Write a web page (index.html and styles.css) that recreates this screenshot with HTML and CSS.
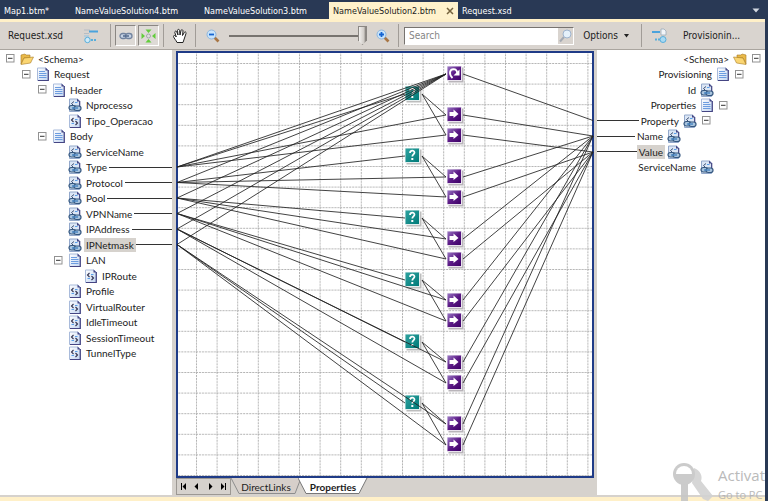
FILE: index.html
```html
<!DOCTYPE html>
<html lang="en">
<head>
    <meta charset="UTF-8">
    <meta name="viewport" content="width=device-width, initial-scale=1.0">
    <title>NameValueSolution2.btm</title>
    <link rel="stylesheet" href="styles.css">
</head>
<body>
    <!-- shared icons -->
    <svg class="sprites" aria-hidden="true">
        <defs>
            <linearGradient id="purple" x1="0" y1="0" x2="1" y2="1">
                <stop offset="0" stop-color="#9a78c4"/>
                <stop offset="0.5" stop-color="#5b1a86"/>
                <stop offset="1" stop-color="#3d0066"/>
            </linearGradient>
            <linearGradient id="teal" x1="0" y1="0" x2="1" y2="1">
                <stop offset="0" stop-color="#2fa3a0"/>
                <stop offset="1" stop-color="#007a78"/>
            </linearGradient>
            <linearGradient id="paper" x1="0" y1="0" x2="1" y2="1">
                <stop offset="0" stop-color="#ffffff"/>
                <stop offset="1" stop-color="#c3d6f2"/>
            </linearGradient>
            <pattern id="grid" x="18" y="10" width="20.6" height="20.6" patternUnits="userSpaceOnUse">
                <path d="M0.5 0V20.6M0 0.5H20.6" stroke="#b2b2b2" stroke-dasharray="2 1" fill="none"/>
            </pattern>
        </defs>
        <symbol id="folder" viewBox="0 0 14 14">
            <path d="M1 3L5 2L6 3H10V6H4L1 12Z" fill="#e9b949" stroke="#a87a22" stroke-width="0.6"/>
            <path d="M4 6L13.5 5L10.5 11L1 12.5Z" fill="#fbd672" stroke="#a87a22" stroke-width="0.6"/>
        </symbol>
        <symbol id="page" viewBox="0 0 14 14">
            <path d="M1.5 1H10L12 3V13.5H1.5Z" fill="url(#paper)" stroke="#a9bbdb"/>
            <path d="M12.3 3V13.5H2" fill="none" stroke="#454583" stroke-width="1.2"/>
            <path d="M9.5 0.5L12.5 3.5H9.5Z" fill="#454583"/>
            <path d="M3 4.5H9M3 6.5H10.5M3 8.5H10.5M3 10.5H10.5" stroke="#6d9de0"/>
        </symbol>
        <symbol id="field" viewBox="0 0 14 14">
            <path d="M1.5 1H10L12 3V13.5H1.5Z" fill="url(#paper)" stroke="#a9bbdb"/>
            <path d="M12.3 3V13.5H2" fill="none" stroke="#454583" stroke-width="1.2"/>
            <path d="M9.5 0.5L12.5 3.5H9.5Z" fill="#454583"/>
            <path d="M5.5 4L3.5 6L5.5 8M7.5 7L9.5 9L7.5 11" fill="none" stroke="#33334f" stroke-width="1.1"/>
            <path d="M7 5.5H9.5M3.5 9.5H6" stroke="#5aa0ea"/>
        </symbol>
        <symbol id="linked" viewBox="0 0 14 14">
            <path d="M1.5 1H9.5L11.5 3V13.5H1.5Z" fill="#dbe6f5" stroke="#93a8cb"/>
            <path d="M9 0.5L12 3.5H9Z" fill="#454583"/>
            <path d="M11.7 3V8" stroke="#454583" stroke-width="1.2"/>
            <path d="M6 3.5L3.5 5.5L5 7" fill="none" stroke="#3c4f74"/>
            <path d="M7 4.5H9.5" stroke="#5aa0ea"/>
            <rect x="1" y="7.5" width="7" height="4.5" rx="2.2" fill="#a9c4de" stroke="#35577f" stroke-width="1.2"/>
            <rect x="6" y="8" width="7" height="4.5" rx="2.2" fill="#a9c4de" stroke="#35577f" stroke-width="1.2"/>
            <path d="M4 10H10" stroke="#3f7fc0" stroke-width="1.3"/>
        </symbol>
        <symbol id="minus" viewBox="0 0 9 9">
            <rect x="0.5" y="0.5" width="7.5" height="7.5" fill="#fff" stroke="#929292"/>
            <path d="M2 4.3H6.5" stroke="#333"/>
        </symbol>
        <symbol id="arrow" viewBox="0 0 17 17">
            <rect x="1.5" y="1.5" width="15" height="15" fill="#b9b5ba"/>
            <rect width="15" height="15" fill="#eae4ee"/>
            <rect x="0.5" y="0.5" width="13.5" height="13.5" fill="url(#purple)"/>
            <path d="M2.5 5H6.5V2.5L11.5 7L6.5 11V9H2.5Z" fill="#fff"/>
        </symbol>
        <symbol id="loop" viewBox="0 0 17 17">
            <rect x="1.5" y="1.5" width="15" height="15" fill="#b9b5ba"/>
            <rect width="15" height="15" fill="#eae4ee"/>
            <rect x="0.5" y="0.5" width="13.5" height="13.5" fill="url(#purple)"/>
            <path d="M5.5 12C1.5 8 2.5 3.5 6.5 3.2C9 3.2 10 5 10.2 7" fill="none" stroke="#fff" stroke-width="1.8"/>
            <path d="M6.5 9.5H12.5V3.5Z" fill="#fff"/>
        </symbol>
        <symbol id="question" viewBox="0 0 17 17">
            <rect x="1.5" y="1.5" width="15" height="15" fill="#bdbdbd"/>
            <rect width="15" height="15" fill="#e4efef"/>
            <rect x="0.5" y="0.5" width="13.5" height="13.5" fill="url(#teal)"/>
            <path d="M5 5C5 2 9.5 2 9.5 4.5C9.5 6.3 7.3 6.3 7.3 8.5" fill="none" stroke="#fff" stroke-width="1.7"/>
            <rect x="6.3" y="10" width="2" height="2" fill="#fff"/>
        </symbol>
        <symbol id="schema" viewBox="0 0 16 16">
            <path d="M1 2H7M1 5.5H6" stroke="#b6bdc4"/>
            <path d="M6 3.5H15" stroke="#4ba3dc" stroke-width="2"/>
            <path d="M1 8H6" stroke="#8fc4e6"/>
            <circle cx="4.5" cy="12" r="2.7" fill="#cfeaf8" stroke="#58aedb"/>
            <path d="M8 12H10M11 12H13" stroke="#58aedb" stroke-width="2"/>
        </symbol>
        <symbol id="schema-out" viewBox="0 0 16 16">
            <path d="M1 4H9" stroke="#4ba3dc" stroke-width="2"/>
            <path d="M10 1H13L15 3V7H10Z" fill="#f2f5f8" stroke="#9aa9b8" stroke-width="0.8"/>
            <path d="M4 11.5H6M7 11.5H9" stroke="#58aedb" stroke-width="2"/>
            <circle cx="12" cy="11.5" r="3" fill="#a9d9f2" stroke="#58aedb"/>
        </symbol>
        <symbol id="zoom-out" viewBox="0 0 14 14">
            <path d="M8.5 8.5L12.5 12.5" stroke="#a87645" stroke-width="2.6"/>
            <circle cx="5.5" cy="5.5" r="4.5" fill="#c8e4fb" stroke="#8db4dc"/>
            <path d="M3 5.5H8" stroke="#1464d2" stroke-width="1.8"/>
        </symbol>
        <symbol id="zoom-in" viewBox="0 0 14 14">
            <path d="M8.5 8.5L12.5 12.5" stroke="#a87645" stroke-width="2.6"/>
            <circle cx="5.5" cy="5.5" r="4.5" fill="#c8e4fb" stroke="#8db4dc"/>
            <path d="M3 5.5H8M5.5 3V8" stroke="#1464d2" stroke-width="1.8"/>
        </symbol>
    </svg>

    <nav class="file-tabs">
        <button class="file-tab">Map1.btm*</button>
        <button class="file-tab">NameValueSolution4.btm</button>
        <button class="file-tab">NameValueSolution3.btm</button>
        <div class="file-tab active">
            <span>NameValueSolution2.btm</span>
            <button class="close" aria-label="Close">
                <svg width="8" height="8" viewBox="0 0 8 8"><path d="M1 1L7 7M7 1L1 7" stroke="#75633d" stroke-width="1.5"/></svg>
            </button>
        </div>
        <button class="file-tab">Request.xsd</button>
        <button class="tab-menu" aria-label="Open files">
            <svg width="8" height="5" viewBox="0 0 8 5"><path d="M0.5 0.5H7.5L4 4.5Z" fill="#d3d9e2"/></svg>
        </button>
    </nav>

    <div class="window">
        <div class="toolbar">
            <div class="group source">
                <span>Request.xsd</span>
                <svg width="16" height="16"><use href="#schema"/></svg>
            </div>
            <div class="group toggles">
                <button class="toggle" aria-label="Show links">
                    <svg width="14" height="10" viewBox="0 0 14 10">
                        <rect x="1" y="2.5" width="6.5" height="5" rx="2.5" fill="#c5d2e4" stroke="#71839f" stroke-width="1.3"/>
                        <rect x="6.5" y="2.5" width="6.5" height="5" rx="2.5" fill="#c5d2e4" stroke="#71839f" stroke-width="1.3"/>
                        <path d="M4 5H10" stroke="#52688c" stroke-width="1.5"/>
                    </svg>
                </button>
                <button class="toggle" aria-label="Center">
                    <svg width="15" height="14" viewBox="0 0 15 14">
                        <path d="M4.5 0.5H10.5L7.5 4ZM4.5 13.5H10.5L7.5 10ZM0.5 4L4 7L0.5 10ZM14.5 4L11 7L14.5 10Z" fill="#62cd3c"/>
                        <circle cx="7.5" cy="7" r="2" fill="#dedede" stroke="#a3a8ad"/>
                    </svg>
                </button>
            </div>
            <div class="group pan">
                <button class="tool" aria-label="Pan">
                    <svg width="16" height="16" viewBox="0 0 16 16">
                        <path d="M5 14.5C4 12 2 10.5 1.5 8.5C1.5 7 3 7 4.3 9L2.8 4.5C2.6 3 4.3 2.5 4.8 4L6 7L5.5 2.5C5.5 1 7.5 1 7.6 2.5L8 7L9 2.5C9.3 1.2 11 1.5 11 3L10.5 7.5L12.3 4.5C13 3.3 14.5 4 14 5.5L12.5 10L11 14.5Z" fill="#fff" stroke="#222"/>
                    </svg>
                </button>
            </div>
            <div class="group zoom">
                <button class="tool" aria-label="Zoom out"><svg width="14" height="14"><use href="#zoom-out"/></svg></button>
                <input class="slider" type="range" min="0" max="100" value="100" aria-label="Zoom">
                <button class="tool" aria-label="Zoom in"><svg width="14" height="14"><use href="#zoom-in"/></svg></button>
            </div>
            <div class="group find">
                <div class="search">
                    <input type="text" placeholder="Search" aria-label="Search">
                    <button class="tool" aria-label="Find">
                        <svg width="15" height="14" viewBox="0 0 15 14">
                            <path d="M6 8L2 12.5" stroke="#a5aab3" stroke-width="2"/>
                            <circle cx="9" cy="5" r="4" fill="#e5f1fb" stroke="#9fb4ce"/>
                        </svg>
                    </button>
                </div>
                <button class="options">
                    Options
                    <svg width="5" height="4" viewBox="0 0 5 4"><path d="M0 0H5L2.5 3.5Z" fill="#222"/></svg>
                </button>
            </div>
            <div class="group target">
                <svg width="16" height="16"><use href="#schema-out"/></svg>
                <span>Provisionin...</span>
            </div>
        </div>

        <div class="mapper">
            <ul class="tree">
                <li class="l0"><svg class="box"><use href="#minus"/></svg><svg class="icon"><use href="#folder"/></svg><span>&lt;Schema&gt;</span></li>
                <li class="l1"><svg class="box"><use href="#minus"/></svg><svg class="icon"><use href="#page"/></svg><span>Request</span></li>
                <li class="l2"><svg class="box"><use href="#minus"/></svg><svg class="icon"><use href="#page"/></svg><span>Header</span></li>
                <li class="l3 leaf"><svg class="icon"><use href="#linked"/></svg><span>Nprocesso</span></li>
                <li class="l3 leaf"><svg class="icon"><use href="#field"/></svg><span>Tipo_Operacao</span></li>
                <li class="l2"><svg class="box"><use href="#minus"/></svg><svg class="icon"><use href="#page"/></svg><span>Body</span></li>
                <li class="l3 leaf"><svg class="icon"><use href="#linked"/></svg><span>ServiceName</span></li>
                <li class="l3 leaf link"><svg class="icon"><use href="#linked"/></svg><span>Type</span></li>
                <li class="l3 leaf link"><svg class="icon"><use href="#linked"/></svg><span>Protocol</span></li>
                <li class="l3 leaf link"><svg class="icon"><use href="#linked"/></svg><span>Pool</span></li>
                <li class="l3 leaf link"><svg class="icon"><use href="#linked"/></svg><span>VPNName</span></li>
                <li class="l3 leaf link"><svg class="icon"><use href="#linked"/></svg><span>IPAddress</span></li>
                <li class="l3 leaf link"><svg class="icon"><use href="#linked"/></svg><span class="selected">IPNetmask</span></li>
                <li class="l3"><svg class="box"><use href="#minus"/></svg><svg class="icon"><use href="#page"/></svg><span>LAN</span></li>
                <li class="l4 leaf"><svg class="icon"><use href="#field"/></svg><span>IPRoute</span></li>
                <li class="l3 leaf"><svg class="icon"><use href="#field"/></svg><span>Profile</span></li>
                <li class="l3 leaf"><svg class="icon"><use href="#field"/></svg><span>VirtualRouter</span></li>
                <li class="l3 leaf"><svg class="icon"><use href="#field"/></svg><span>IdleTimeout</span></li>
                <li class="l3 leaf"><svg class="icon"><use href="#field"/></svg><span>SessionTimeout</span></li>
                <li class="l3 leaf"><svg class="icon"><use href="#field"/></svg><span>TunnelType</span></li>
            </ul>

            <main class="center">
                <div class="canvas">
                    <svg viewBox="0 0 414 423">
                        <rect width="414" height="423" fill="url(#grid)"/>
                        <!-- functoids -->
                        <use href="#loop" x="269" y="13" width="17" height="17"/>
                        <use href="#question" x="227" y="33" width="17" height="17"/>
                        <use href="#question" x="227" y="95" width="17" height="17"/>
                        <use href="#question" x="227" y="157" width="17" height="17"/>
                        <use href="#question" x="227" y="219" width="17" height="17"/>
                        <use href="#question" x="227" y="281" width="17" height="17"/>
                        <use href="#question" x="227" y="342" width="17" height="17"/>
                        <use href="#arrow" x="269" y="54" width="17" height="17"/>
                        <use href="#arrow" x="269" y="75" width="17" height="17"/>
                        <use href="#arrow" x="269" y="116" width="17" height="17"/>
                        <use href="#arrow" x="269" y="137" width="17" height="17"/>
                        <use href="#arrow" x="269" y="178" width="17" height="17"/>
                        <use href="#arrow" x="269" y="199" width="17" height="17"/>
                        <use href="#arrow" x="269" y="240" width="17" height="17"/>
                        <use href="#arrow" x="269" y="260" width="17" height="17"/>
                        <use href="#arrow" x="269" y="302" width="17" height="17"/>
                        <use href="#arrow" x="269" y="322" width="17" height="17"/>
                        <use href="#arrow" x="269" y="363" width="17" height="17"/>
                        <use href="#arrow" x="269" y="384" width="17" height="17"/>
                        <g class="wires">
                            <!-- source fields to functoids -->
                            <path d="M-1 114L268 21M-1 114L227 41M-1 114L268 62M-1 114L268 82"/>
                            <path d="M-1 129.5L268 21M-1 129.5L227 103M-1 129.5L268 124M-1 129.5L268 144"/>
                            <path d="M-1 145L268 21M-1 145L227 165M-1 145L268 186M-1 145L268 206"/>
                            <path d="M-1 160.5L268 21M-1 160.5L227 227M-1 160.5L268 247M-1 160.5L268 268"/>
                            <path d="M-1 176L268 21M-1 176L227 289M-1 176L268 309M-1 176L268 330"/>
                            <path d="M-1 191.5L268 21M-1 191.5L227 350M-1 191.5L268 371M-1 191.5L268 392"/>
                            <!-- question outputs -->
                            <path d="M244 41L268 62M244 41L268 82M244 103L268 124M244 103L268 144M244 165L268 186M244 165L268 206"/>
                            <path d="M244 227L268 247M244 227L268 268M244 289L268 309M244 289L268 330M244 350L268 371M244 350L268 392"/>
                            <!-- functoids to target fields -->
                            <path d="M285 21L415 67.5"/>
                            <path d="M285 62L415 83M285 124L415 83M285 186L415 83M285 247L415 83M285 309L415 83M285 371L415 83"/>
                            <path d="M285 82L415 99M285 144L415 99M285 206L415 99M285 268L415 99M285 330L415 99M285 392L415 99"/>
                        </g>
                    </svg>
                </div>
                <div class="pages">
                    <div class="pager">
                        <button aria-label="First page"><svg width="7" height="7" viewBox="0 0 7 7"><path d="M1 0H2V7H1ZM6 0V7L2.5 3.5Z"/></svg></button>
                        <button aria-label="Previous page"><svg width="7" height="7" viewBox="0 0 7 7"><path d="M5 0V7L1.5 3.5Z"/></svg></button>
                        <button aria-label="Next page"><svg width="7" height="7" viewBox="0 0 7 7"><path d="M2 0V7L5.5 3.5Z"/></svg></button>
                        <button aria-label="Last page"><svg width="7" height="7" viewBox="0 0 7 7"><path d="M1 0V7L4.5 3.5ZM5 0H6V7H5Z"/></svg></button>
                    </div>
                    <button class="page-tab">
                        <svg viewBox="0 0 70 17" preserveAspectRatio="none"><path d="M0 0L8 15.5H64L70 0" fill="#d6cfca" stroke="#8d8d8d"/></svg>
                        <span>DirectLinks</span>
                    </button>
                    <button class="page-tab current">
                        <svg viewBox="0 0 70 17" preserveAspectRatio="none"><path d="M0 0L8 15.5H61L69 0" fill="#fff" stroke="#777"/></svg>
                        <span>Properties</span>
                    </button>
                </div>
            </main>

            <div class="target-side">
                <ul class="tree mirrored">
                    <li class="l0"><svg class="box"><use href="#minus"/></svg><svg class="icon flip"><use href="#folder"/></svg><span>&lt;Schema&gt;</span></li>
                    <li class="l1"><svg class="box"><use href="#minus"/></svg><svg class="icon"><use href="#page"/></svg><span>Provisioning</span></li>
                    <li class="l2 leaf"><svg class="icon"><use href="#linked"/></svg><span>Id</span></li>
                    <li class="l2"><svg class="box"><use href="#minus"/></svg><svg class="icon"><use href="#page"/></svg><span>Properties</span></li>
                    <li class="l3 link"><svg class="box"><use href="#minus"/></svg><svg class="icon"><use href="#linked"/></svg><span>Property</span></li>
                    <li class="l4 leaf link"><svg class="icon"><use href="#linked"/></svg><span>Name</span></li>
                    <li class="l4 leaf link"><svg class="icon"><use href="#linked"/></svg><span class="selected">Value</span></li>
                    <li class="l2 leaf"><svg class="icon"><use href="#linked"/></svg><span>ServiceName</span></li>
                </ul>
            </div>
        </div>
    </div>

    <div class="watermark">
        <svg width="42" height="38" viewBox="0 0 42 38">
            <path d="M22 5C28 7 31 13 29 18L41 33L36 38L31 36L20 20Z" fill="#d2d2d2"/>
            <path d="M9 18H16V38H9Z" fill="#c6c6c6"/>
            <circle cx="12" cy="11" r="11" fill="#c6c6c6"/>
            <path d="M4 11A8 8 0 0 1 20 11Z" fill="#fff"/>
        </svg>
        <div>
            <p class="big">Activat</p>
            <p>Go to PC</p>
        </div>
    </div>
</body>
</html>
```
FILE: styles.css
```css
* {
    box-sizing: border-box;
}
body {
    margin: 0;
    min-height: 100vh;
    display: flex;
    flex-direction: column;
    position: relative;
    overflow: hidden;
    background: #293955;
    color: #1c1c1c;
    font-family: "DejaVu Sans Condensed", "DejaVu Sans", sans-serif;
    font-size: 10px;
    line-height: 14px;
}
button {
    border: none;
    background: none;
    padding: 0;
    color: inherit;
    font: inherit;
    cursor: pointer;
}
svg {
    display: block;
    flex: none;
}
.sprites {
    position: absolute;
    width: 0;
    height: 0;
}

/* open files */
.file-tabs {
    display: flex;
    height: 19px;
    padding-top: 2px;
    font-size: 9px;
}
.file-tab {
    padding: 0 22px 0 4px;
    color: #fff;
    white-space: nowrap;
}
.file-tab.active {
    display: flex;
    align-items: center;
    gap: 10px;
    padding-right: 4px;
    background: #fff2cc;
    color: #1c1c1c;
}
.tab-menu {
    margin-left: auto;
    padding-right: 8px;
}

.window {
    flex: 1;
    display: flex;
    flex-direction: column;
    margin-right: 3px;
    border-top: 3px solid #fff0c8;
    border-bottom: 4px solid #fff0c8;
    background: #d6d2cd;
}

/* toolbar */
.toolbar {
    display: flex;
    height: 28px;
    border-bottom: 1px solid #aaa59f;
    background: #d9d4cf;
}
.group {
    display: flex;
    align-items: center;
    border-left: 1px solid #a19c97;
    margin: 2px 0;
}
.source {
    width: 110px;
    justify-content: space-between;
    padding: 0 11px 0 8px;
    border-left: none;
}
.toggles {
    gap: 2px;
    padding: 0 4px;
}
.toggle {
    display: flex;
    align-items: center;
    justify-content: center;
    width: 21px;
    height: 21px;
    border: 1px solid;
    border-color: #8b8783 #fff #fff #8b8783;
    background: #dedad6;
}
.pan {
    width: 32px;
    justify-content: center;
}
.zoom {
    gap: 9px;
    padding: 0 8px 0 10px;
}
.slider {
    width: 138px;
    height: 20px;
    margin: 0;
    appearance: none;
    background: linear-gradient(#77736f, #77736f) center / 100% 2px no-repeat;
}
.slider::-webkit-slider-thumb {
    appearance: none;
    width: 9px;
    height: 19px;
    background: linear-gradient(90deg, #f2f0ee, #d0ccc7 70%, #77736f);
    border: 1px solid #8b8783;
    clip-path: polygon(0 0, 100% 0, 100% 75%, 50% 100%, 0 75%);
}
.find {
    flex: 1;
    gap: 9px;
    padding: 0 12px 0 5px;
}
.search {
    flex: 1;
    display: flex;
    align-items: center;
    height: 18px;
    border: 1px solid;
    border-color: #77736f #fff #fff #77736f;
}
.search input {
    flex: 1;
    min-width: 0;
    height: 16px;
    padding: 0 4px;
    border: none;
    background: #fff;
    font: inherit;
}
.search input::placeholder {
    color: #858585;
}
.options {
    display: flex;
    align-items: center;
    gap: 6px;
}
.target {
    width: 124px;
    gap: 16px;
    padding-left: 9px;
}

/* trees */
.mapper {
    flex: 1;
    display: grid;
    grid-template-columns: 176px 1fr 171px;
    padding-bottom: 2px;
}
.tree {
    display: grid;
    grid-template-rows: repeat(20, 1fr);
    max-height: 445px;
    margin: 0;
    padding: 1px 0 134px;
    list-style: none;
    background: #fff;
    border-right: 4px solid #d6d2cd;
    font-family: Lato, "Liberation Sans", sans-serif;
    line-height: 14px;
}
.tree li {
    display: flex;
    align-items: center;
    min-height: 0;
    padding-left: 6px;
}
.tree .box {
    width: 9px;
    height: 9px;
    margin-right: 5px;
}
.tree .icon {
    width: 14px;
    height: 14px;
}
.tree span {
    padding: 0 2px;
    margin-left: 2px;
    white-space: nowrap;
}
.tree .selected {
    background: #d6d2cd;
}
.tree .link::after {
    content: "";
    flex: 1;
    height: 1px;
    background: #333;
}
.tree .l1 { padding-left: 22px; }
.tree .l2 { padding-left: 38px; }
.tree .l3 { padding-left: 54px; }
.tree .l3.leaf { padding-left: 68px; }
.tree .l4.leaf { padding-left: 84px; }

.target-side {
    border-left: 3px solid #d6d2cd;
}
.mirrored {
    height: 100%;
    border-right: none;
}
.mirrored li {
    flex-direction: row-reverse;
}
.mirrored .box {
    margin: 0 0 0 5px;
}
.mirrored span {
    margin: 0 2px 0 0;
}
.mirrored .flip {
    transform: scaleX(-1);
}
.tree.mirrored .l0 { padding: 0 4px 0 0; }
.tree.mirrored .l1 { padding: 0 21px 0 0; }
.tree.mirrored .l2 { padding: 0 37px 0 0; }
.tree.mirrored .l3 { padding: 0 54px 0 0; }
.tree.mirrored .l2.leaf { padding: 0 51px 0 0; }
.tree.mirrored .l4.leaf { padding: 0 84px 0 0; }

/* map */
.center {
    padding-top: 1px;
}
.canvas {
    border: 2px solid #1f3b87;
    background: #fff;
}
.canvas svg {
    width: 100%;
    height: auto;
    overflow: visible;
}
.wires path {
    fill: none;
    stroke: #222;
    stroke-opacity: 0.85;
}
.pages {
    display: flex;
    height: 17px;
    font-family: Lato, "Liberation Sans", sans-serif;
}
.pager {
    display: flex;
    align-items: center;
    justify-content: space-between;
    width: 55px;
    padding: 0 3px;
    border: 1px solid #9c9893;
}
.page-tab {
    position: relative;
    width: 70px;
}
.page-tab svg {
    position: absolute;
    inset: 0;
    width: 100%;
    height: 100%;
}
.page-tab span {
    position: relative;
}
.page-tab.current {
    margin-left: -3px;
    font-weight: bold;
}

/* activation notice, lies over the window corner */
.watermark {
    position: absolute;
    right: 0;
    bottom: 0;
    display: flex;
    gap: 4px;
    width: 96px;
    height: 38px;
    overflow: hidden;
    color: #b3b3b3;
    font-family: "Open Sans", sans-serif;
    font-size: 11px;
    white-space: nowrap;
    opacity: 0.9;
}
.watermark p {
    margin: 0;
    line-height: 20px;
}
.watermark .big {
    padding-top: 2px;
    font-size: 15px;
}
```
